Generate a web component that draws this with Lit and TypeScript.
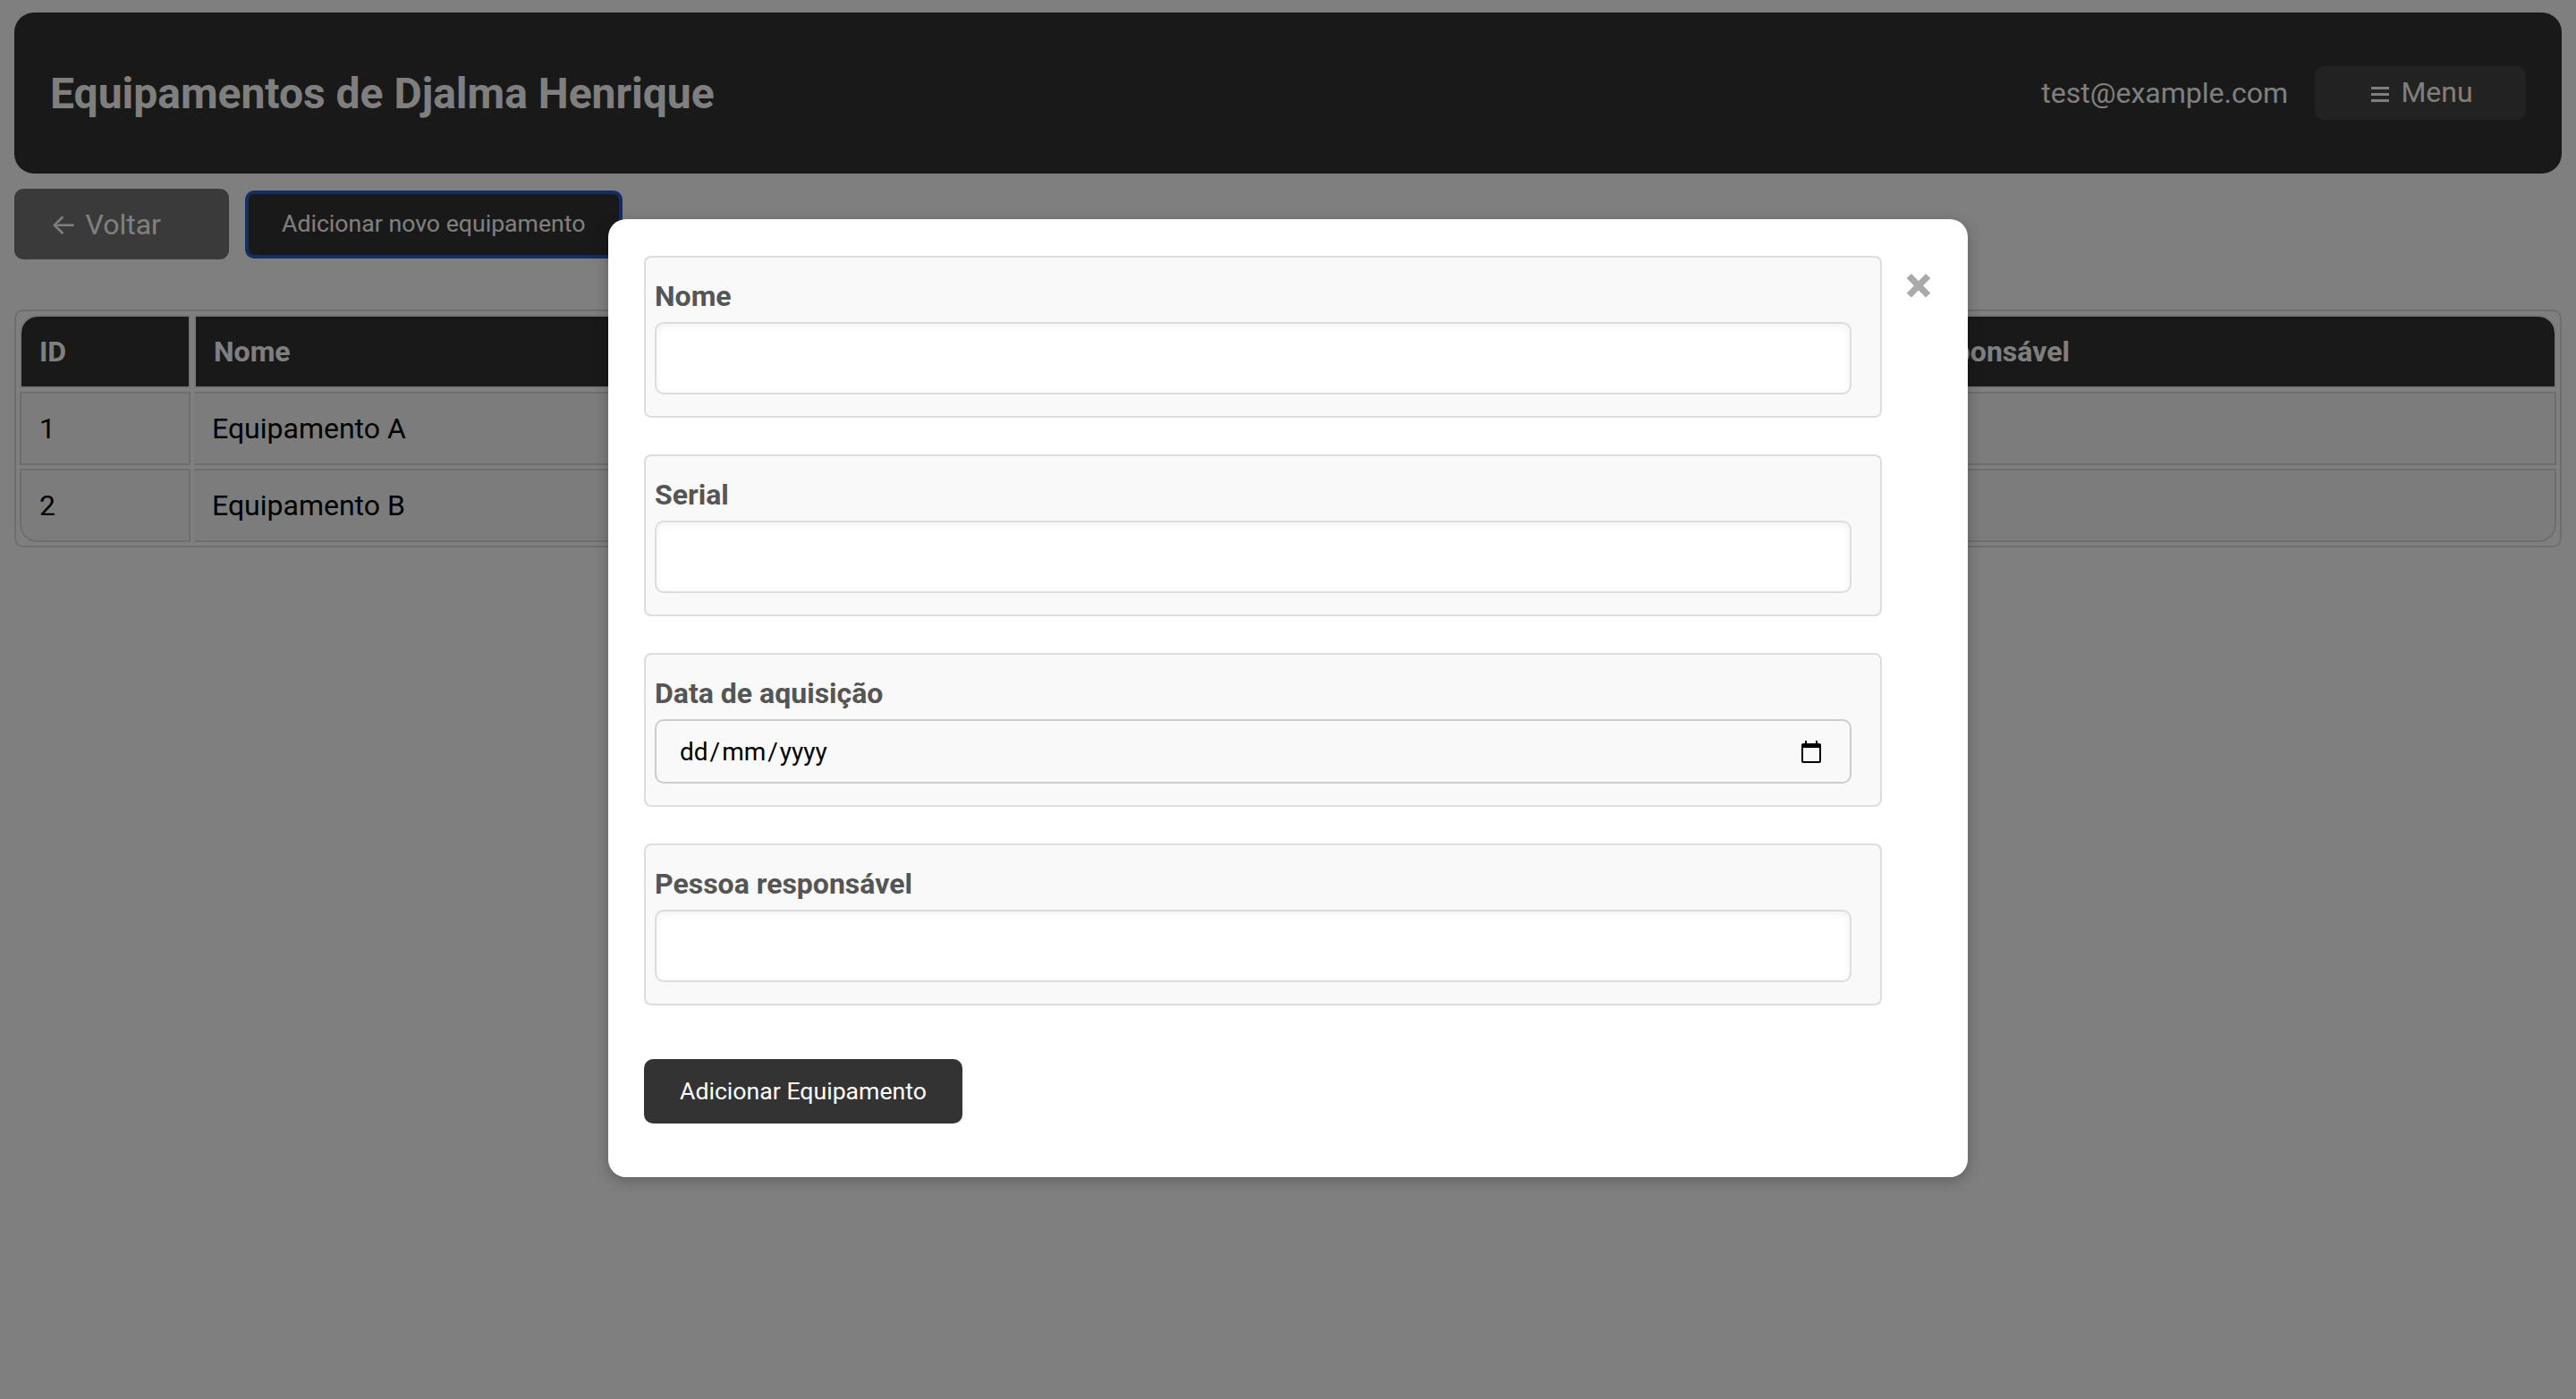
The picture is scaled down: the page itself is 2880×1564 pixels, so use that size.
import { LitElement, html, css } from "lit";
import { customElement } from "lit/decorators.js";

@customElement("app-root")
export class AppRoot extends LitElement {
  static styles = css`
    :host { display: block; position: relative; height: 1564px; background: #fff; overflow: hidden; font-family: Roboto, "Liberation Sans", sans-serif; color: #000; }
    * { box-sizing: border-box; }
    .page { padding: 14px 16px 0; display: flex; flex-direction: column; }
    .top { height: 180px; background: #333; border-radius: 22px; display: flex; align-items: center; justify-content: space-between; padding: 0 40px; color: #fff; }
    h1 { margin: 0; font-size: 48px; font-weight: 700; }
    .user { display: flex; align-items: center; gap: 30px; font-size: 32px; }
    .menu { width: 236px; height: 60px; border-radius: 10px; background: #444; color: #fff; display: flex; align-items: center; justify-content: center; gap: 13px; font-size: 32px; padding: 0 0 3px 4px; }
    .bars { width: 20px; height: 17px; border-top: 3px solid #fff; border-bottom: 3px solid #fff; position: relative; margin-top: 6px; }
    .bars::after { content: ""; position: absolute; left: 0; right: 0; top: 4px; height: 3px; background: #fff; }
    .actions { display: flex; align-items: center; gap: 18px; margin-top: 17px; }
    .back { width: 240px; height: 79px; background: #757575; border-radius: 10px; color: #fff; font-size: 32px; display: flex; align-items: center; gap: 9px; padding-left: 40px; }
    .arrow { font-family: Inter, sans-serif; }
    .add { height: 76px; padding: 0 37px 2px; background: #333; color: #fff; border: 4px solid #2a5bc4; border-radius: 10px; font-size: 26.67px; display: flex; align-items: center; }
    .tablewrap { margin-top: 56px; border: 2px solid #ddd; border-radius: 10px; }
    table { width: 100%; border-collapse: separate; border-spacing: 4px; table-layout: fixed; font-size: 32px; }
    th { background: #333; background-clip: padding-box; color: #fff; text-align: left; height: 82px; padding: 0 20px; font-weight: 700; font-size: 32px; border: 2px solid #eee; }
    th:first-child { border-top-left-radius: 20px; }
    th:last-child { border-top-right-radius: 20px; }
    td { height: 82px; padding: 0 20px; border: 2px solid #ddd; border-width: 2px 0; background: #f9f9f9; }
    td:first-child { border-left-width: 2px; border-right-width: 2px; }
    td:last-child { border-right-width: 2px; }
    tr:last-child td:first-child { border-bottom-left-radius: 20px; }
    tr:last-child td:last-child { border-bottom-right-radius: 20px; }
    .c1 { width: 191px; }
    .c5 { width: 854px; }
    .overlay { position: absolute; inset: 0; background: rgba(0,0,0,.5); display: flex; justify-content: center; padding-top: 245px; align-items: flex-start; }
    .modal { position: relative; width: 1520px; height: 1071px; background: #fff; border-radius: 20px; padding: 41px 40px 0; box-shadow: 0 4px 16px rgba(0,0,0,.25); }
    .close { position: absolute; top: 41px; right: 40px; color: #aaa; font-size: 56px; font-weight: 900; line-height: 66px; }
    form { width: 1384px; display: flex; flex-direction: column; gap: 41px; }
    .group { background: #f9f9f9; border: 2px solid #ddd; border-radius: 8px; padding: 24px 10px 24px; display: flex; flex-direction: column; gap: 10px; }
    label { font-size: 32px; font-weight: 700; color: #555; line-height: 38px; }
    .input { width: 1338px; height: 81px; background: #fff; border: 2px solid #ddd; border-radius: 10px; box-shadow: inset 0 2px 8px rgba(0,0,0,.06); }
    .date { height: 72px; background: #f9f9f9; border-color: #ccc; box-shadow: none; display: flex; align-items: center; justify-content: space-between; padding: 0 32px 0 26px; font-size: 28px; }
    .slash { padding: 0 2px; }
    .submit { margin-top: 19px; width: 356px; height: 72px; background: #333; color: #fff; border-radius: 10px; font-size: 26.67px; display: flex; align-items: center; justify-content: center; }
    svg { display: block; }
  `;
  render() {
    return html`
      <div class="page">
        <div class="top">
          <h1>Equipamentos de Djalma Henrique</h1>
          <div class="user"><span>test@example.com</span><div class="menu"><div class="bars"></div><span>Menu</span></div></div>
        </div>
        <div class="actions">
          <div class="back"><span class="arrow">←</span><span>Voltar</span></div>
          <div class="add">Adicionar novo equipamento</div>
        </div>
        <div class="tablewrap">
          <table>
            <colgroup><col class="c1" /><col /><col /><col /><col class="c5" /></colgroup>
            <thead><tr><th>ID</th><th>Nome</th><th>Serial</th><th>Data de aquisição</th><th>Pessoa responsável</th></tr></thead>
            <tbody>
              <tr><td>1</td><td>Equipamento A</td><td></td><td></td><td></td></tr>
              <tr><td>2</td><td>Equipamento B</td><td></td><td></td><td></td></tr>
            </tbody>
          </table>
        </div>
      </div>
      <div class="overlay">
        <div class="modal">
          <div class="close">×</div>
          <form>
            <div class="group"><label>Nome</label><div class="input"></div></div>
            <div class="group"><label>Serial</label><div class="input"></div></div>
            <div class="group"><label>Data de aquisição</label>
              <div class="input date"><span>dd<span class="slash">/</span>mm<span class="slash">/</span>yyyy</span>
                <svg width="22" height="25" viewBox="0 0 22 25"><path fill="#000" d="M4 0h2v3h10V0h2v3h2a2 2 0 0 1 2 2v18a2 2 0 0 1-2 2H2a2 2 0 0 1-2-2V5a2 2 0 0 1 2-2h2zM2 8v14.500c0 .3.200.5.500.5h17c.3 0 .5-.2.500-.5V8z"/></svg>
              </div>
            </div>
            <div class="group"><label>Pessoa responsável</label><div class="input"></div></div>
            <div class="submit">Adicionar Equipamento</div>
          </form>
        </div>
      </div>
    `;
  }
}
